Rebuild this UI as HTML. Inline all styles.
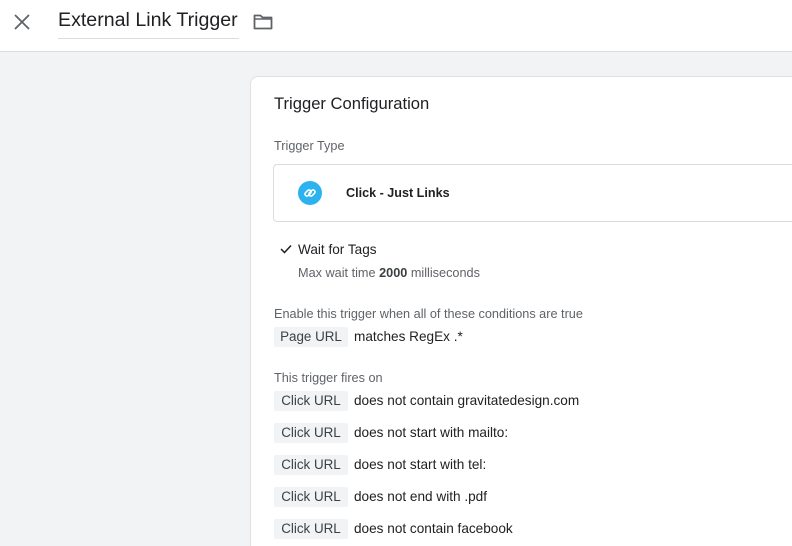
<!DOCTYPE html>
<html><head><meta charset="utf-8"><style>
*{margin:0;padding:0;box-sizing:border-box}
html,body{width:792px;height:546px;overflow:hidden}
body{background:#f1f3f4;font-family:"Liberation Sans",Arial,sans-serif;color:#202124;position:relative}
.hdr{position:absolute;left:0;top:0;width:792px;height:52px;background:#fff;border-bottom:1px solid #dadce0}
.title{position:absolute;left:58px;top:9px;font-size:19.6px;color:#202124;padding-bottom:6px;border-bottom:1px solid #dadce0;width:181px;white-space:nowrap}
.card{position:absolute;left:250px;top:76px;width:542px;height:470px;background:#fff;border:1px solid #e0e0e0;border-right:none;border-bottom:none;border-radius:8px 0 0 0}
.a{position:absolute;white-space:nowrap}
.lbl{font-size:12.7px;color:#5f6368}
.chip{position:absolute;left:274px;height:20px;width:74px;background:#f1f3f4;border-radius:2px;font-size:13.4px;color:#3c4043;line-height:20px;text-align:center}
.cond{position:absolute;left:354px;font-size:13.6px;color:#202124;line-height:20px;white-space:nowrap}
</style></head><body>
<div class="hdr">
<svg style="position:absolute;left:13px;top:13px" width="18" height="18" viewBox="0 0 18 18"><path d="M2 2L16 16M16 2L2 16" stroke="#5f6368" stroke-width="1.8"/></svg>
<div class="title">External Link Trigger</div>
<svg style="position:absolute;left:253px;top:13px" width="20" height="17" viewBox="0 0 20 17"><path d="M1.5 2.5h6l2 2h9v11h-17z" fill="none" stroke="#5f6368" stroke-width="1.8" stroke-linejoin="round"/><path d="M1.5 6h17" stroke="#5f6368" stroke-width="1.5"/></svg>
</div>
<div class="card"></div>
<div class="a" style="left:274px;top:94px;font-size:16.6px">Trigger Configuration</div>
<div class="a lbl" style="left:274px;top:139px">Trigger Type</div>
<div style="position:absolute;left:273px;top:164px;width:530px;height:58px;border:1px solid #dadce0;border-radius:4px"></div>
<svg style="position:absolute;left:298px;top:181px" width="24" height="24" viewBox="0 0 24 24"><circle cx="12" cy="12" r="12" fill="#2cb2ef"/><g fill="none" stroke="#fff" stroke-width="1.6"><rect x="6.5" y="10" width="7" height="4" rx="2" transform="rotate(-45 10 12)"/><rect x="10.5" y="10" width="7" height="4" rx="2" transform="rotate(-45 14 12)"/></g></svg>
<div class="a" style="left:346px;top:186px;font-size:12.6px;font-weight:bold;color:#202124">Click - Just Links</div>
<svg style="position:absolute;left:280px;top:244px" width="12" height="10" viewBox="0 0 12 10"><path d="M1 5l3.5 3.5L11 1.5" fill="none" stroke="#202124" stroke-width="1.5"/></svg>
<div class="a" style="left:298px;top:242px;font-size:13.6px">Wait for Tags</div>
<div class="a lbl" style="left:298px;top:266px">Max wait time <b style="color:#3c4043">2000</b> milliseconds</div>
<div class="a lbl" style="left:274px;top:307px">Enable this trigger when all of these conditions are true</div>
<div class="chip" style="top:327px">Page URL</div><div class="cond" style="top:327px">matches RegEx .*</div>
<div class="a lbl" style="left:274px;top:371px">This trigger fires on</div>
<div class="chip" style="top:391px">Click URL</div><div class="cond" style="top:391px">does not contain gravitatedesign.com</div>
<div class="chip" style="top:423px">Click URL</div><div class="cond" style="top:423px">does not start with mailto:</div>
<div class="chip" style="top:455px">Click URL</div><div class="cond" style="top:455px">does not start with tel:</div>
<div class="chip" style="top:487px">Click URL</div><div class="cond" style="top:487px">does not end with .pdf</div>
<div class="chip" style="top:519px">Click URL</div><div class="cond" style="top:519px">does not contain facebook</div>
</body></html>
